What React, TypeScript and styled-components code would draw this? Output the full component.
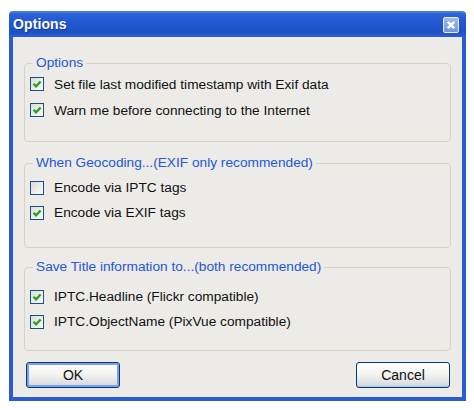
import * as React from 'react'
import styled, { createGlobalStyle } from 'styled-components'

const GlobalStyle = createGlobalStyle`
	body {
		margin: 0;
		background: #fff;
		font-family: "Liberation Sans", Arial, sans-serif;
	}
`

const Window = styled.div`
	margin: 11px 0 0 9px;
	width: 457px;
	display: flex;
	flex-direction: column;
	border-radius: 4px 4px 0 0;
	overflow: hidden;
`

const TitleBar = styled.div`
	height: 26px;
	display: flex;
	align-items: center;
	justify-content: space-between;
	padding: 0 7px 0 4px;
	background: linear-gradient(#5286e6 0%, #2c62d6 12%, #2157cf 50%, #1d50c6 80%, #2b60d4 100%);
`

const TitleText = styled.span`
	color: #fff;
	font-weight: bold;
	font-size: 14px;
	letter-spacing: 0.1px;
	text-shadow: 1px 1px 0 #1a3c8c;
`

const CloseButton = styled.div`
	width: 14px;
	height: 14px;
	margin-top: 2px;
	display: flex;
	align-items: center;
	justify-content: center;
	border: 1px solid #e6eefc;
	border-radius: 2px;
	background: linear-gradient(#9fbbee, #7096de);
`

const Client = styled.div`
	background: #ecebe8;
	border: 4px solid #2a5dd2;
	border-top: none;
	padding: 19px 11px 9px 11px;
	display: flex;
	flex-direction: column;
`

interface GroupProps {
	padTop: number
	padBottom: number
	gapAbove: number
}
const Group = styled.fieldset<GroupProps>`
	margin: ${({ gapAbove }) => gapAbove}px 0 0 0;
	padding: ${({ padTop }) => padTop}px 5px ${({ padBottom }) => padBottom}px 5px;
	border: 1px solid #d3d3cc;
	border-radius: 4px;
	min-width: 0;
`

const Legend = styled.legend`
	margin-left: 3px;
	padding: 0 3px;
	color: #2458d4;
	font-size: 13.7px;
	line-height: 14px;
`

interface RowProps {
	h: number
}
const Row = styled.div<RowProps>`
	height: ${({ h }) => h}px;
	display: flex;
	align-items: center;
	gap: 10px;
	font-size: 13.7px;
	color: #111;
`

const Box = styled.span`
	width: 12px;
	height: 12px;
	border: 1px solid #1c5180;
	background: linear-gradient(135deg, #dcdcd7, #fbfbf9);
	display: flex;
	align-items: center;
	justify-content: center;
	flex: none;
`

const ButtonRow = styled.div`
	margin-top: 11px;
	display: flex;
	justify-content: space-between;
	padding: 0 1px 0 2px;
`

interface ButtonProps {
	isDefault?: boolean
}
const Button = styled.button<ButtonProps>`
	width: 94px;
	height: 26px;
	font-family: "Liberation Sans", Arial, sans-serif;
	font-size: 14px;
	color: #111;
	border: 1px solid #003c74;
	border-radius: 3px;
	background: linear-gradient(#ffffff 0%, #f4f4f0 45%, #dcdfe6 85%, #c9d0dc 100%);
	box-shadow: ${({ isDefault }) =>
		isDefault ? 'inset 0 0 0 2px #7ea0e6' : 'inset 0 -1px 0 #b8c2d6'};
	padding: 0;
`

const Check = () => (
	<svg width="10" height="10" viewBox="0 0 10 10">
		<path d="M1.5 4.8 L4 7.3 L8.6 2.4" stroke="#21a121" strokeWidth="2.2" fill="none" />
	</svg>
)

const CheckItem: React.FC<{ checked: boolean; label: string; h: number }> = ({ checked, label, h }) => (
	<Row h={h}>
		<Box>{checked && <Check />}</Box>
		<span>{label}</span>
	</Row>
)

export default function App() {
	return (
		<>
			<GlobalStyle />
			<Window>
				<TitleBar>
					<TitleText>Options</TitleText>
					<CloseButton>
						<svg width="10" height="10" viewBox="0 0 10 10">
							<path d="M1.8 1.8 L8.2 8.2 M8.2 1.8 L1.8 8.2" stroke="#fff" strokeWidth="2.4" />
						</svg>
					</CloseButton>
				</TitleBar>
				<Client>
					<Group gapAbove={0} padTop={1} padBottom={18}>
						<Legend>Options</Legend>
						<CheckItem h={26} checked label="Set file last modified timestamp with Exif data" />
						<CheckItem h={26} checked label="Warn me before connecting to the Internet" />
					</Group>
					<Group gapAbove={14} padTop={5} padBottom={22}>
						<Legend>When Geocoding...(EXIF only recommended)</Legend>
						<CheckItem h={25} checked={false} label="Encode via IPTC tags" />
						<CheckItem h={25} checked label="Encode via EXIF tags" />
					</Group>
					<Group gapAbove={12} padTop={10} padBottom={16}>
						<Legend>Save Title information to...(both recommended)</Legend>
						<CheckItem h={25} checked label="IPTC.Headline (Flickr compatible)" />
						<CheckItem h={25} checked label="IPTC.ObjectName (PixVue compatible)" />
					</Group>
					<ButtonRow>
						<Button isDefault>OK</Button>
						<Button>Cancel</Button>
					</ButtonRow>
				</Client>
			</Window>
		</>
	)
}
